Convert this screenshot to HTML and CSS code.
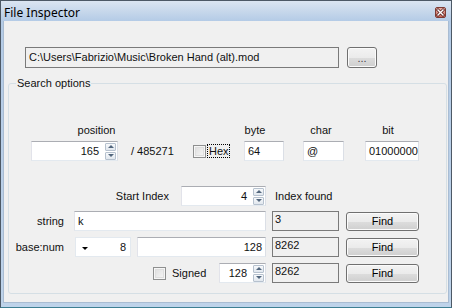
FILE: index.html
```html
<!doctype html>
<html lang="en">
<head>
    <meta charset="UTF-8">
    <title>File Inspector</title>
    <link rel="stylesheet" href="styles.css">
</head>
<body>
<div class="window">
    <div class="titlebar">
        <span class="title">File Inspector</span>
        <span class="close">
            <svg width="11" height="11" viewBox="0 0 11 11">
                <path d="M3 3 L8 8 M8 3 L3 8" stroke="#5a2020" stroke-width="3" stroke-linecap="square"/>
                <path d="M3 3 L8 8 M8 3 L3 8" stroke="#ffffff" stroke-width="1.4" stroke-linecap="square"/>
            </svg>
        </span>
    </div>
    <div class="client">
        <div class="path-row">
            <div class="readout path">C:\Users\Fabrizio\Music\Broken Hand (alt).mod</div>
            <button class="btn browse">...</button>
        </div>
        <fieldset class="group">
            <legend>Search options</legend>

            <div class="row labels">
                <span class="cap cap-position">position</span>
                <span class="cap cap-byte">byte</span>
                <span class="cap cap-char">char</span>
                <span class="cap cap-bit">bit</span>
            </div>

            <div class="row values">
                <div class="numeric num-position">
                    <span class="num-text">165</span>
                    <span class="spin"><i class="up"></i><i class="down"></i></span>
                </div>
                <span class="total">/ 485271</span>
                <span class="check"></span>
                <span class="hex">Hex</span>
                <div class="textbox tb-byte">64</div>
                <div class="textbox tb-char">@</div>
                <div class="textbox tb-bit">01000000</div>
            </div>

            <div class="row start">
                <span class="start-label">Start Index</span>
                <div class="numeric num-start">
                    <span class="num-text">4</span>
                    <span class="spin"><i class="up"></i><i class="down"></i></span>
                </div>
                <span class="found-label">Index found</span>
            </div>

            <div class="row">
                <span class="side-label">string</span>
                <div class="textbox tb-string">k</div>
                <div class="readout out">3</div>
                <button class="btn find">Find</button>
            </div>

            <div class="row">
                <span class="side-label">base:num</span>
                <div class="combo"><i class="arrow"></i><span>8</span></div>
                <div class="textbox tb-num">128</div>
                <div class="readout out">8262</div>
                <button class="btn find">Find</button>
            </div>

            <div class="row">
                <span class="check check-signed"></span>
                <span class="signed-label">Signed</span>
                <div class="numeric num-signed">
                    <span class="num-text">128</span>
                    <span class="spin"><i class="up"></i><i class="down"></i></span>
                </div>
                <div class="readout out">8262</div>
                <button class="btn find">Find</button>
            </div>
        </fieldset>
    </div>
</div>
</body>
</html>
```

FILE: styles.css
```css
* {
    box-sizing: border-box;
}

body {
    margin: 0;
    font-family: "Liberation Sans", Arial, sans-serif;
    font-size: 11px;
    color: #111111;
    background: #ffffff;
}

.window {
    width: 452px;
    height: 308px;
    display: flex;
    flex-direction: column;
    border: 1px solid #4d5966;
    border-bottom-color: #3d7f93;
    padding: 0 3px 4px 3px;
    background: linear-gradient(#dbe5f1 0px, #b4cbe6 20px, #bed3ea 100%);
}

.titlebar {
    height: 20px;
    display: flex;
    align-items: center;
    justify-content: space-between;
}

.title {
    font-family: "Noto Sans", sans-serif;
    font-size: 12px;
    margin-top: 2px;
    color: #000000;
}

.close {
    width: 11px;
    height: 11px;
    margin-right: 2px;
    margin-top: 2px;
    border: 1px solid #7d3b33;
    border-radius: 2px;
    background: linear-gradient(#e8b1a6, #c8695b);
    display: flex;
}

.close svg {
    margin: -1px;
}

.client {
    flex: 1;
    background: #f0f0f0;
    padding-top: 26px;
    border: 1px solid #a9bcd2;
    border-top: none;
    margin-left: -1px;
    margin-right: -1px;
    padding-left: 1px;
}

/* path row */
.path-row {
    display: flex;
    padding-left: 20px;
}

.readout {
    background: #f0f0f0;
    border: 1px solid #7a7a7a;
    padding: 2px 0 0 2px;
    white-space: nowrap;
    overflow: hidden;
}

.path {
    width: 314px;
    height: 21px;
    padding: 3px 0 0 3px;
}

.btn {
    font-family: inherit;
    font-size: 11px;
    color: #000000;
    border: 1px solid #707070;
    border-radius: 3px;
    background: linear-gradient(#f3f3f3 0%, #ebebeb 50%, #dddddd 51%, #cfcfcf 100%);
    box-shadow: inset 0 0 0 1px #fbfbfb;
    padding: 0;
}

.browse {
    width: 30px;
    height: 21px;
    margin-left: 8px;
    color: #444444;
}

/* group box */
.group {
    margin: 9px 0 0 3px;
    width: 439px;
    padding: 0 0 10px 0;
    border: 1px solid #d5dfe5;
    border-radius: 3px;
    min-width: 0;
}

.group legend {
    margin-left: 7px;
    padding: 0 1px;
    line-height: 12px;
    font-size: 11px;
}

.row {
    display: flex;
    align-items: center;
    height: 20px;
}

.labels {
    margin-top: 35px;
    height: 13px;
}

.cap {
    text-align: center;
    line-height: 13px;
}

.cap-position {
    width: 71px;
    margin-left: 52px;
}

.cap-byte {
    width: 40px;
    margin-left: 103px;
}

.cap-char {
    width: 40px;
    margin-left: 26px;
}

.cap-bit {
    width: 40px;
    margin-left: 27px;
}

.values {
    margin-top: 4px;
}

/* inputs */
.textbox, .numeric, .combo {
    height: 20px;
    background: #ffffff;
    border: 1px solid;
    border-color: #abadb3 #dbdfe6 #e3e9ef #e2e3ea;
}

.textbox {
    padding: 3px 0 0 3px;
}

.numeric {
    display: flex;
    justify-content: flex-end;
    align-items: center;
    padding-right: 1px;
}

.num-text {
    margin-right: 6px;
}

.spin {
    width: 11px;
    height: 17px;
    display: flex;
    flex-direction: column;
    gap: 1px;
}

.spin i {
    flex: 1;
    border: 1px solid #b6c1ce;
    border-radius: 1px;
    background: linear-gradient(#f7f9fb, #e1e7ee);
    display: flex;
    align-items: center;
    justify-content: center;
}

.spin .up::before {
    content: "";
    border-left: 3px solid transparent;
    border-right: 3px solid transparent;
    border-bottom: 3px solid #52667d;
}

.spin .down::before {
    content: "";
    border-left: 3px solid transparent;
    border-right: 3px solid transparent;
    border-top: 3px solid #52667d;
}

.num-position {
    width: 87px;
    margin-left: 22px;
}

.total {
    width: 62px;
    margin-left: 13px;
}

.check {
    width: 13px;
    height: 13px;
    border: 1px solid #8e8f8f;
    background: linear-gradient(135deg, #dcdcdc, #f8f8f8);
    box-shadow: inset 0 0 0 1px #f6f6f6, inset 0 0 0 2px #dedede;
}

.hex {
    width: 23px;
    height: 14px;
    margin-left: 1px;
    line-height: 12px;
    padding-left: 1px;
    border: 1px dotted #000000;
}

.tb-byte {
    width: 40px;
    margin-left: 14px;
}

.tb-char {
    width: 41px;
    margin-left: 19px;
}

.tb-bit {
    width: 54px;
    margin-left: 21px;
}

.start {
    margin-top: 25px;
}

.start-label {
    width: 160px;
    text-align: right;
}

.num-start {
    width: 85px;
    margin-left: 12px;
}

.found-label {
    margin-left: 9px;
}

.row + .row:not(.start):not(.values) {
    margin-top: 6px;
}

.start + .row {
    margin-top: 5px !important;
}

.side-label {
    width: 55px;
    text-align: right;
}

.tb-string {
    width: 192px;
    margin-left: 10px;
}

.out {
    width: 67px;
    height: 20px;
    margin-left: 6px;
    padding-top: 1px;
}

.find {
    width: 73px;
    height: 19px;
    margin-left: 7px;
}

.combo {
    width: 56px;
    margin-left: 11px;
    display: flex;
    align-items: center;
    justify-content: space-between;
    padding: 0 4px 0 6px;
    border-color: #e3e9ef;
}

.combo .arrow {
    border-left: 3px solid transparent;
    border-right: 3px solid transparent;
    border-top: 3px solid #000000;
    margin-top: 2px;
}

.tb-num {
    width: 129px;
    margin-left: 6px;
    text-align: right;
    padding-right: 3px;
}

.check-signed {
    margin-left: 144px;
}

.signed-label {
    width: 47px;
    margin-left: 6px;
}

.num-signed {
    width: 47px;
}
```
